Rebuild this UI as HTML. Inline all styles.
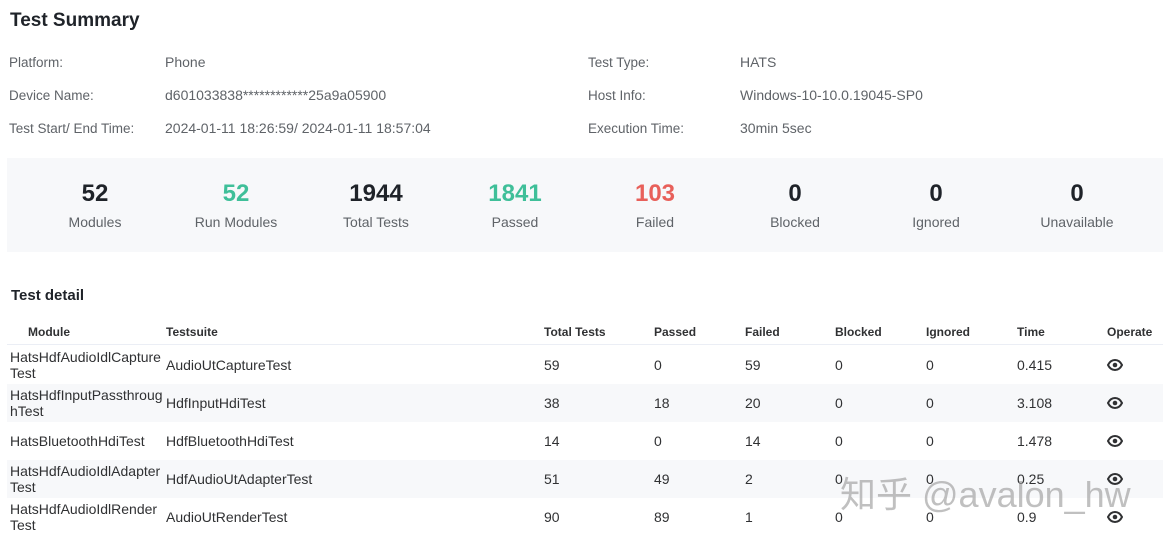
<!DOCTYPE html>
<html><head><meta charset="utf-8"><style>
*{margin:0;padding:0;box-sizing:border-box}
body{width:1163px;height:538px;background:#fff;font-family:"Liberation Sans",Arial,sans-serif;position:relative;overflow:hidden;color:#303133}
.a{position:absolute;white-space:nowrap}
.t{font-size:19px;font-weight:bold;color:#1f2329}
.l{font-size:13.5px;color:#5f6368;line-height:16px}
.v{font-size:14px;color:#5f6368;line-height:16px}
.stats{position:absolute;left:7px;top:158px;width:1156px;height:94px;background:#f7f8fa}
.s{position:absolute;width:140px;text-align:center}
.n{font-size:24px;font-weight:bold;top:22px;color:#1f2329}
.sl{font-size:14px;color:#5f6368;top:56px}
.g{color:#3fbf99}.r{color:#e8605a}
.h{font-size:12px;font-weight:bold;color:#303133;top:325px}
.c{font-size:14px;color:#303133;line-height:16px}
.row{position:absolute;left:7px;width:1156px;height:38px}
.eye{position:absolute}
</style></head><body>
<div class="a t" style="left:10px;top:10px">Test Summary</div>
<div class="a l" style="left:9px;top:55px">Platform:</div>
<div class="a v" style="left:165px;top:54px">Phone</div>
<div class="a l" style="left:9px;top:88px">Device Name:</div>
<div class="a v" style="left:165px;top:87px">d601033838************25a9a05900</div>
<div class="a l" style="left:9px;top:121px">Test Start/ End Time:</div>
<div class="a v" style="left:165px;top:120px">2024-01-11 18:26:59/ 2024-01-11 18:57:04</div>
<div class="a l" style="left:588px;top:55px">Test Type:</div>
<div class="a v" style="left:740px;top:54px">HATS</div>
<div class="a l" style="left:588px;top:88px">Host Info:</div>
<div class="a v" style="left:740px;top:87px">Windows-10-10.0.19045-SP0</div>
<div class="a l" style="left:588px;top:121px">Execution Time:</div>
<div class="a v" style="left:740px;top:120px">30min 5sec</div>
<div class="stats">
<div class="s n" style="left:18px">52</div><div class="s sl" style="left:18px">Modules</div>
<div class="s n g" style="left:159px">52</div><div class="s sl" style="left:159px">Run Modules</div>
<div class="s n" style="left:299px">1944</div><div class="s sl" style="left:299px">Total Tests</div>
<div class="s n g" style="left:438px">1841</div><div class="s sl" style="left:438px">Passed</div>
<div class="s n r" style="left:578px">103</div><div class="s sl" style="left:578px">Failed</div>
<div class="s n" style="left:718px">0</div><div class="s sl" style="left:718px">Blocked</div>
<div class="s n" style="left:859px">0</div><div class="s sl" style="left:859px">Ignored</div>
<div class="s n" style="left:1000px">0</div><div class="s sl" style="left:1000px">Unavailable</div>
</div>
<div class="a" style="left:11px;top:287px;font-size:15px;font-weight:bold;color:#1f2329">Test detail</div>
<div class="a h" style="left:28px">Module</div>
<div class="a h" style="left:166px">Testsuite</div>
<div class="a h" style="left:544px">Total Tests</div>
<div class="a h" style="left:654px">Passed</div>
<div class="a h" style="left:745px">Failed</div>
<div class="a h" style="left:835px">Blocked</div>
<div class="a h" style="left:926px">Ignored</div>
<div class="a h" style="left:1017px">Time</div>
<div class="a h" style="left:1107px">Operate</div>
<div class="a" style="left:7px;top:344px;width:1156px;height:1px;background:#ebeef5"></div>
<div class="row" style="top:384px;background:#f7f8fa"></div>
<div class="row" style="top:460px;background:#f7f8fa"></div>
<div class="a c" style="left:10px;top:349px">HatsHdfAudioIdlCapture<br>Test</div>
<div class="a c" style="left:10px;top:387px">HatsHdfInputPassthroug<br>hTest</div>
<div class="a c" style="left:10px;top:433px">HatsBluetoothHdiTest</div>
<div class="a c" style="left:10px;top:463px">HatsHdfAudioIdlAdapter<br>Test</div>
<div class="a c" style="left:10px;top:501px">HatsHdfAudioIdlRender<br>Test</div>
<div class="a c" style="left:166px;top:357px">AudioUtCaptureTest</div>
<div class="a c" style="left:166px;top:395px">HdfInputHdiTest</div>
<div class="a c" style="left:166px;top:433px">HdfBluetoothHdiTest</div>
<div class="a c" style="left:166px;top:471px">HdfAudioUtAdapterTest</div>
<div class="a c" style="left:166px;top:509px">AudioUtRenderTest</div>
<div class="a c" style="left:544px;top:357px">59</div><div class="a c" style="left:654px;top:357px">0</div><div class="a c" style="left:745px;top:357px">59</div><div class="a c" style="left:835px;top:357px">0</div><div class="a c" style="left:926px;top:357px">0</div><div class="a c" style="left:1017px;top:357px">0.415</div>
<div class="a c" style="left:544px;top:395px">38</div><div class="a c" style="left:654px;top:395px">18</div><div class="a c" style="left:745px;top:395px">20</div><div class="a c" style="left:835px;top:395px">0</div><div class="a c" style="left:926px;top:395px">0</div><div class="a c" style="left:1017px;top:395px">3.108</div>
<div class="a c" style="left:544px;top:433px">14</div><div class="a c" style="left:654px;top:433px">0</div><div class="a c" style="left:745px;top:433px">14</div><div class="a c" style="left:835px;top:433px">0</div><div class="a c" style="left:926px;top:433px">0</div><div class="a c" style="left:1017px;top:433px">1.478</div>
<div class="a c" style="left:544px;top:471px">51</div><div class="a c" style="left:654px;top:471px">49</div><div class="a c" style="left:745px;top:471px">2</div><div class="a c" style="left:835px;top:471px">0</div><div class="a c" style="left:926px;top:471px">0</div><div class="a c" style="left:1017px;top:471px">0.25</div>
<div class="a c" style="left:544px;top:509px">90</div><div class="a c" style="left:654px;top:509px">89</div><div class="a c" style="left:745px;top:509px">1</div><div class="a c" style="left:835px;top:509px">0</div><div class="a c" style="left:926px;top:509px">0</div><div class="a c" style="left:1017px;top:509px">0.9</div>
<svg width="0" height="0" style="position:absolute"><defs><g id="e"><path d="M1 6C3 2 6 1 8 1s5 1 7 5c-2 4-5 5-7 5S3 10 1 6z" fill="none" stroke="#303133" stroke-width="2"/><circle cx="8" cy="6" r="2.3" fill="#303133"/></g></defs></svg>
<svg class="eye" style="left:1107px;top:359px" width="16" height="12"><use href="#e"/></svg>
<svg class="eye" style="left:1107px;top:397px" width="16" height="12"><use href="#e"/></svg>
<svg class="eye" style="left:1107px;top:435px" width="16" height="12"><use href="#e"/></svg>
<svg class="eye" style="left:1107px;top:473px" width="16" height="12"><use href="#e"/></svg>
<svg class="eye" style="left:1107px;top:511px" width="16" height="12"><use href="#e"/></svg>
<div class="a" style="left:840px;top:466px;font-size:36px;color:rgba(150,150,150,0.6);font-family:'Liberation Sans','Noto Sans CJK SC',sans-serif">知乎 @avalon_hw</div>
</body></html>
